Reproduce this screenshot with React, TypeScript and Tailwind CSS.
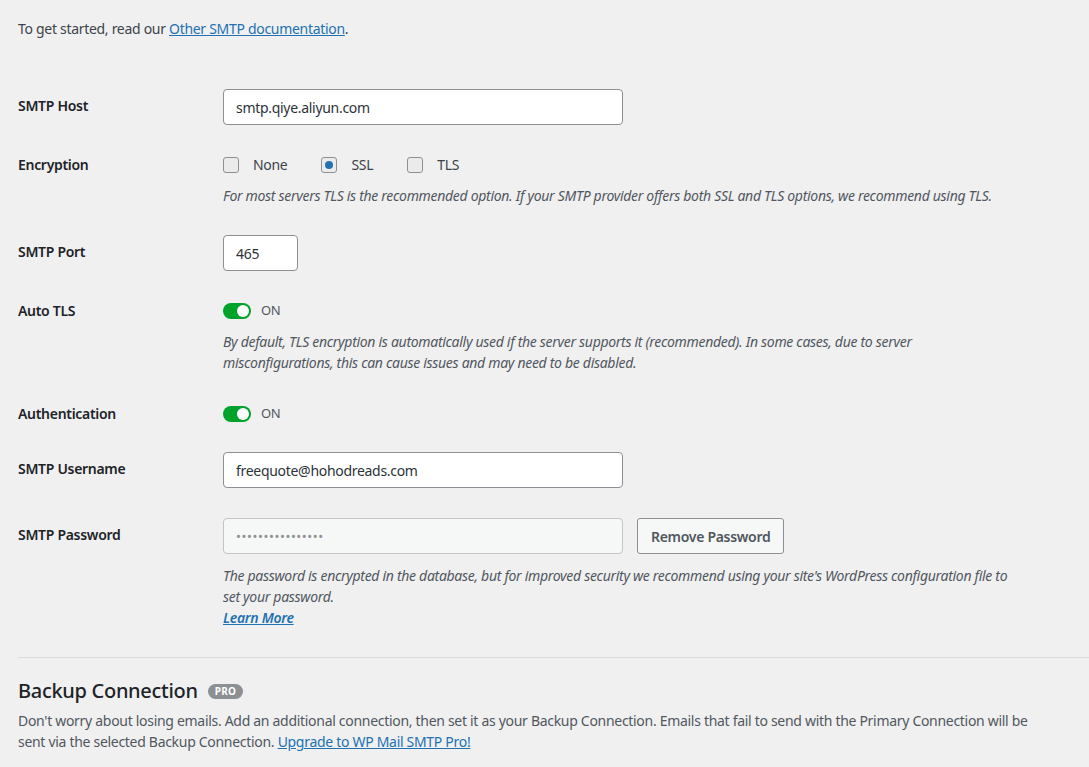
import React from 'react';

const Label: React.FC<{ children: React.ReactNode; tall?: boolean }> = ({ children, tall }) => (
  <div
    className={`w-[205px] shrink-0 text-[14px] font-semibold text-[#1d2327] ${
      tall ? 'h-[36px] flex items-center pb-[3px]' : 'leading-[20px]'
    }`}
  >
    {children}
  </div>
);

const Choice: React.FC<{ label: string; checked?: boolean }> = ({ label, checked }) => (
  <div className="flex items-center">
    <span className="w-[16px] h-[16px] rounded-[3px] border border-[#8c8f94] bg-[#ebebeb] flex items-center justify-center">
      {checked && <span className="w-[8px] h-[8px] rounded-full bg-[#2271b1]" />}
    </span>
    <span className="ml-[14px] text-[14px] leading-[20px] text-[#3c434a]">{label}</span>
  </div>
);

const Toggle: React.FC = () => (
  <div className="flex items-center h-[20px]">
    <span className="w-[28px] h-[16px] rounded-full bg-[#00a32a] flex items-center justify-end pr-[2px]">
      <span className="w-[12px] h-[12px] rounded-full bg-white" />
    </span>
    <span className="ml-[10px] text-[13px] text-[#50575e]">ON</span>
  </div>
);

const Desc: React.FC<{ children: React.ReactNode; className?: string }> = ({ children, className }) => (
  <p className={`italic text-[14px] leading-[21px] text-[#50575e] whitespace-nowrap ${className ?? ''}`}>
    {children}
  </p>
);

export default function App() {
  return (
    <div className="min-h-screen bg-[#f0f0f1] font-['Segoe_UI','Noto_Sans',sans-serif] tracking-[-0.3px] text-[#3c434a] overflow-hidden">
      <div className="pl-[18px] pt-[19px] pb-10">
        <p className="text-[14px] leading-[20px]">
          To get started, read our{' '}
          <a href="#" className="text-[#2271b1] underline">
            Other SMTP documentation
          </a>
          .
        </p>

        {/* SMTP Host */}
        <div className="flex mt-[50px]">
          <Label tall>SMTP Host</Label>
          <input
            readOnly
            value="smtp.qiye.aliyun.com"
            className="w-[400px] h-[36px] px-[12px] bg-white border border-[#8c8f94] rounded-[4px] text-[14px] text-[#2c3338] outline-none"
          />
        </div>

        {/* Encryption */}
        <div className="flex mt-[30px]">
          <Label>Encryption</Label>
          <div>
            <div className="flex gap-[34px]">
              <Choice label="None" />
              <Choice label="SSL" checked />
              <Choice label="TLS" />
            </div>
            <Desc className="mt-[10px]">
              For most servers TLS is the recommended option. If your SMTP provider offers both SSL and TLS options, we
              recommend using TLS.
            </Desc>
          </div>
        </div>

        {/* SMTP Port */}
        <div className="flex mt-[29px]">
          <Label tall>SMTP Port</Label>
          <input
            readOnly
            value="465"
            className="w-[75px] h-[36px] px-[12px] bg-white border border-[#8c8f94] rounded-[4px] text-[14px] text-[#2c3338] outline-none"
          />
        </div>

        {/* Auto TLS */}
        <div className="flex mt-[30px]">
          <Label>Auto TLS</Label>
          <div>
            <Toggle />
            <Desc className="mt-[10px]">
              By default, TLS encryption is automatically used if the server supports it (recommended). In some cases,
              due to server
              <br />
              misconfigurations, this can cause issues and may need to be disabled.
            </Desc>
          </div>
        </div>

        {/* Authentication */}
        <div className="flex mt-[31px]">
          <Label>Authentication</Label>
          <Toggle />
        </div>

        {/* SMTP Username */}
        <div className="flex mt-[28px]">
          <Label tall>SMTP Username</Label>
          <input
            readOnly
            value="freequote@hohodreads.com"
            className="w-[400px] h-[36px] px-[12px] bg-white border border-[#8c8f94] rounded-[4px] text-[14px] text-[#2c3338] outline-none"
          />
        </div>

        {/* SMTP Password */}
        <div className="flex mt-[30px]">
          <Label tall>SMTP Password</Label>
          <div>
            <div className="flex gap-[14px]">
              <input
                readOnly
                type="password"
                value="aaaaaaaaaaaaaaaa"
                className="w-[400px] h-[36px] px-[12px] bg-[#f6f7f7] border border-[#c3c4c7] rounded-[4px] text-[13px] tracking-[0.6px] text-[#8c8f94] outline-none"
              />
              <button className="h-[36px] px-[13px] bg-[#f6f7f7] border border-[#8c8f94] rounded-[3px] text-[14px] font-semibold text-[#50575e]">
                Remove Password
              </button>
            </div>
            <Desc className="mt-[11px]">
              The password is encrypted in the database, but for improved security we recommend using your site's
              WordPress configuration file to
              <br />
              set your password.
              <br />
              <a href="#" className="font-semibold text-[#2271b1] underline">
                Learn More
              </a>
            </Desc>
          </div>
        </div>

        <div className="mt-[29px] h-px bg-[#dcdcde]" />

        <div className="flex items-center mt-[19px] h-[28px]">
          <h2 className="text-[20px] font-medium text-[#1d2327] leading-[28px]">Backup Connection</h2>
          <span className="ml-[10px] h-[15px] px-[7px] rounded-full bg-[#8c8f94] text-white text-[10px] font-bold leading-[15px] tracking-[0.3px]">
            PRO
          </span>
        </div>
        <p className="mt-[5px] text-[14px] leading-[21px] text-[#50575e] whitespace-nowrap">
          Don't worry about losing emails. Add an additional connection, then set it as your Backup Connection. Emails
          that fail to send with the Primary Connection will be
          <br />
          sent via the selected Backup Connection.{' '}
          <a href="#" className="text-[#2271b1] underline">
            Upgrade to WP Mail SMTP Pro!
          </a>
        </p>
      </div>
    </div>
  );
}
